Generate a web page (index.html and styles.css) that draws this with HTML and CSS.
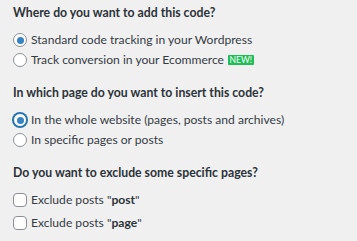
FILE: index.html
```html
<!DOCTYPE html>
<html>
<head>
<meta charset="utf-8">
<link rel="stylesheet" href="styles.css">
</head>
<body>
<div class="panel">
  <section class="group">
    <h3 class="title">Where do you want to add this code?</h3>
    <div class="options">
      <label class="option"><span class="radio checked"></span>Standard code tracking in your Wordpress</label>
      <label class="option"><span class="radio"></span>Track conversion in your Ecommerce <span class="badge">NEW!</span></label>
    </div>
  </section>
  <section class="group">
    <h3 class="title">In which page do you want to insert this code?</h3>
    <div class="options">
      <label class="option"><span class="radio checked focus"></span>In the whole website (pages, posts and archives)</label>
      <label class="option"><span class="radio"></span>In specific pages or posts</label>
    </div>
  </section>
  <section class="group">
    <h3 class="title">Do you want to exclude some specific pages?</h3>
    <div class="options checks">
      <label class="option"><span class="check"></span>Exclude posts "<b>post</b>"</label>
      <label class="option"><span class="check"></span>Exclude posts "<b>page</b>"</label>
    </div>
  </section>
</div>
</body>
</html>
```
FILE: styles.css
```css
html, body {
  margin: 0;
  padding: 0;
  background: #f0f0f1;
}
body {
  font-family: Lato, "Noto Sans", sans-serif;
  font-size: 12.1px;
  color: #353b42;
}
.panel {
  padding: 3px 13px 0 13px;
  display: flex;
  flex-direction: column;
  gap: 13px;
}
.title {
  margin: 0 0 8px 0;
  font-size: 12.25px;
  line-height: 19px;
  font-weight: 700;
  color: #2c3338;
}
.options {
  display: flex;
  flex-direction: column;
}
.checks {
  gap: 3px;
}
.option {
  display: flex;
  align-items: center;
  height: 20px;
  line-height: 20px;
  white-space: nowrap;
}
.option b {
  font-weight: 700;
  color: #2c3338;
}
.radio {
  box-sizing: border-box;
  width: 14px;
  height: 14px;
  border: 1px solid #8c8f94;
  border-radius: 50%;
  background: #fff;
  margin-right: 4px;
  flex: none;
  display: flex;
  align-items: center;
  justify-content: center;
}
.radio.checked::after {
  content: "";
  width: 7px;
  height: 7px;
  border-radius: 50%;
  background: #3582c4;
}
.radio.focus {
  border-color: #2271b1;
  box-shadow: 0 0 0 1px #2271b1;
}
.check {
  box-sizing: border-box;
  width: 14px;
  height: 14px;
  border: 1px solid #8c8f94;
  border-radius: 4px;
  background: #fff;
  margin-right: 4px;
  flex: none;
}
.badge {
  display: inline-block;
  margin-left: 4px;
  background: #1ebd55;
  color: #fff;
  font-size: 8.5px;
  line-height: 10px;
  height: 10px;
  padding: 0 1.5px;
  border-radius: 1px;
}
```
